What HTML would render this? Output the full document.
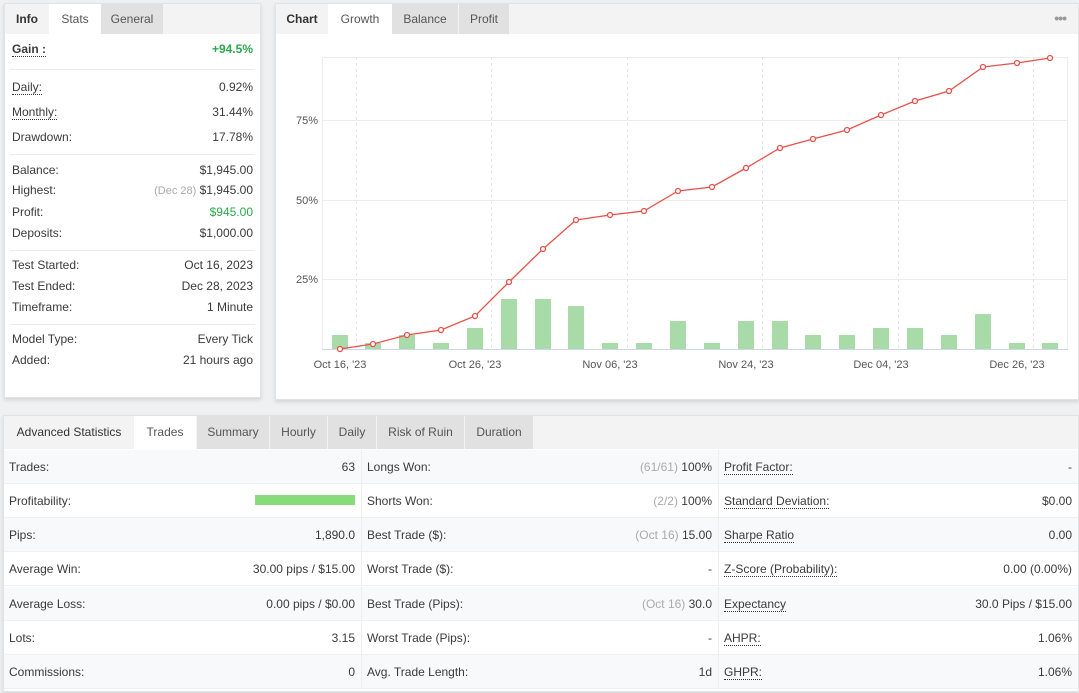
<!DOCTYPE html>
<html><head><meta charset="utf-8"><style>
*{box-sizing:border-box;margin:0;padding:0}
body{width:1079px;height:693px;background:#eef0f2;font-family:"Liberation Sans",sans-serif;font-size:12px;color:#3a3a3a;position:relative;overflow:hidden}
.panel{position:absolute;background:#fff;border:1px solid #e3e3e3;box-shadow:0 2px 4px rgba(0,0,0,.12)}
.tabs{position:absolute;left:0;top:0;right:0;height:30px;background:#f3f3f3}
.tab{position:absolute;top:0;height:30px;line-height:30px;text-align:center;color:#555}
.tab.g{background:#e1e1e1}
.tab.a{background:#fff}
.r{position:absolute;left:7px;right:7px;height:18px;line-height:18px}
.r .v{position:absolute;right:0;top:0}
.u{border-bottom:1px dotted #333}
.sep{position:absolute;left:5px;right:5px;height:1px;background:#eaeaea}
.grey{color:#aaa}
.green{color:#2aa84a}
.row{position:absolute;left:0;right:0;height:34px;line-height:34px;border-bottom:1px solid #eef0f2}
.row.o{background:#f7f9fb}
.c{position:absolute;top:0;height:33px}
.c .v{position:absolute;right:6px;top:0}
.c .l{position:absolute;left:5px;top:0}
</style></head><body>

<div class="panel" style="left:4px;top:3px;width:257px;height:395px">
 <div class="tabs" style="width:255px">
  <div class="tab" style="left:0;width:44px;font-weight:bold;color:#333">Info</div>
  <div class="tab a" style="left:44px;width:52px">Stats</div>
  <div class="tab g" style="left:96px;width:62px">General</div>
 </div>
 <div class="r" style="top:36px"><span class="u" style="font-weight:bold">Gain :</span><span class="v green" style="font-weight:bold">+94.5%</span></div>
 <div class="sep" style="top:65px"></div>
 <div class="r" style="top:74px"><span class="u">Daily:</span><span class="v">0.92%</span></div>
 <div class="r" style="top:99px"><span class="u">Monthly:</span><span class="v">31.44%</span></div>
 <div class="r" style="top:124px">Drawdown:<span class="v">17.78%</span></div>
 <div class="sep" style="top:150px"></div>
 <div class="r" style="top:157px">Balance:<span class="v">$1,945.00</span></div>
 <div class="r" style="top:177px">Highest:<span class="v"><span class="grey" style="font-size:11px">(Dec 28)</span> $1,945.00</span></div>
 <div class="r" style="top:199px">Profit:<span class="v green">$945.00</span></div>
 <div class="r" style="top:220px">Deposits:<span class="v">$1,000.00</span></div>
 <div class="sep" style="top:246px"></div>
 <div class="r" style="top:252px">Test Started:<span class="v">Oct 16, 2023</span></div>
 <div class="r" style="top:273px">Test Ended:<span class="v">Dec 28, 2023</span></div>
 <div class="r" style="top:294px">Timeframe:<span class="v">1 Minute</span></div>
 <div class="sep" style="top:320px"></div>
 <div class="r" style="top:326px">Model Type:<span class="v">Every Tick</span></div>
 <div class="r" style="top:347px">Added:<span class="v">21 hours ago</span></div>
</div>

<div class="panel" style="left:275px;top:3px;width:804px;height:397px">
 <div class="tabs">
  <div class="tab" style="left:0;width:52px;font-weight:bold;color:#333">Chart</div>
  <div class="tab a" style="left:52px;width:64px">Growth</div>
  <div class="tab g" style="left:116px;width:66px">Balance</div>
  <div class="tab g" style="left:183px;width:50px">Profit</div>
  <div style="position:absolute;right:12px;top:6px;color:#999;font-size:14px;letter-spacing:-1px;font-weight:bold">•••</div>
 </div>
</div>
<svg style="position:absolute;left:0;top:0" width="1079" height="400">
 <g stroke="#ececec" stroke-width="1">
  <line x1="322" y1="57.5" x2="1068" y2="57.5"/>
  <line x1="322" y1="120.5" x2="1068" y2="120.5"/>
  <line x1="322" y1="200.5" x2="1068" y2="200.5"/>
  <line x1="322" y1="279.5" x2="1068" y2="279.5"/>
  <line x1="322.5" y1="57" x2="322.5" y2="349"/>
  <line x1="1067.5" y1="57" x2="1067.5" y2="349"/>
 </g>
 <g stroke="#e6e6e6" stroke-dasharray="3,3">
  <line x1="356.5" y1="57" x2="356.5" y2="349"/><line x1="491.5" y1="57" x2="491.5" y2="349"/>
  <line x1="627.5" y1="57" x2="627.5" y2="349"/><line x1="762.5" y1="57" x2="762.5" y2="349"/>
  <line x1="898.5" y1="57" x2="898.5" y2="349"/><line x1="1033.5" y1="57" x2="1033.5" y2="349"/>
 </g>
 <g fill="#a9dba9">
  <rect x="332" y="335" width="16" height="14"/><rect x="365" y="343" width="16" height="6"/>
  <rect x="399" y="335" width="16" height="14"/><rect x="433" y="343" width="16" height="6"/>
  <rect x="467" y="328" width="16" height="21"/><rect x="501" y="299" width="16" height="50"/>
  <rect x="535" y="299" width="16" height="50"/><rect x="568" y="306" width="16" height="43"/>
  <rect x="602" y="343" width="16" height="6"/><rect x="636" y="343" width="16" height="6"/>
  <rect x="670" y="321" width="16" height="28"/><rect x="704" y="343" width="16" height="6"/>
  <rect x="738" y="321" width="16" height="28"/><rect x="772" y="321" width="16" height="28"/>
  <rect x="805" y="335" width="16" height="14"/><rect x="839" y="335" width="16" height="14"/>
  <rect x="873" y="328" width="16" height="21"/><rect x="907" y="328" width="16" height="21"/>
  <rect x="941" y="335" width="16" height="14"/><rect x="975" y="314" width="16" height="35"/>
  <rect x="1009" y="343" width="16" height="6"/><rect x="1042" y="343" width="16" height="6"/>
 </g>
 <line x1="322" y1="349.5" x2="1068" y2="349.5" stroke="#ccd6eb"/>
 <polyline fill="none" stroke="#e8514a" stroke-width="1.3" points="340,349 373,344 407,335 441,330 475,316 509,282 543,249 576,220 610,215 644,211 678,191 712,187 746,168 780,148 813,139 847,130 881,115 915,101 949,91 983,67 1017,63 1050,58"/>
 <g fill="#fff" stroke="#e8514a" stroke-width="1.3">
  <circle cx="340" cy="349" r="2.5"/><circle cx="373" cy="344" r="2.5"/><circle cx="407" cy="335" r="2.5"/><circle cx="441" cy="330" r="2.5"/><circle cx="475" cy="316" r="2.5"/><circle cx="509" cy="282" r="2.5"/><circle cx="543" cy="249" r="2.5"/><circle cx="576" cy="220" r="2.5"/><circle cx="610" cy="215" r="2.5"/><circle cx="644" cy="211" r="2.5"/><circle cx="678" cy="191" r="2.5"/><circle cx="712" cy="187" r="2.5"/><circle cx="746" cy="168" r="2.5"/><circle cx="780" cy="148" r="2.5"/><circle cx="813" cy="139" r="2.5"/><circle cx="847" cy="130" r="2.5"/><circle cx="881" cy="115" r="2.5"/><circle cx="915" cy="101" r="2.5"/><circle cx="949" cy="91" r="2.5"/><circle cx="983" cy="67" r="2.5"/><circle cx="1017" cy="63" r="2.5"/><circle cx="1050" cy="58" r="2.5"/>
 </g>
 <g font-family="Liberation Sans,sans-serif" font-size="11" fill="#555">
  <text x="318" y="124" text-anchor="end">75%</text><text x="318" y="204" text-anchor="end">50%</text><text x="318" y="283" text-anchor="end">25%</text>
  <text x="340" y="368" text-anchor="middle">Oct 16, '23</text><text x="475" y="368" text-anchor="middle">Oct 26, '23</text>
  <text x="610" y="368" text-anchor="middle">Nov 06, '23</text><text x="746" y="368" text-anchor="middle">Nov 24, '23</text>
  <text x="881" y="368" text-anchor="middle">Dec 04, '23</text><text x="1017" y="368" text-anchor="middle">Dec 26, '23</text>
 </g>
</svg>

<div class="panel" style="left:3px;top:415px;width:1076px;height:277px">
 <div class="tabs" style="height:33px">
  <div class="tab" style="left:0;width:130px;height:33px;line-height:33px;color:#333">Advanced Statistics</div>
  <div class="tab a" style="left:130px;width:62px;height:33px;line-height:33px">Trades</div>
  <div class="tab g" style="left:193px;width:72px;height:33px;line-height:33px">Summary</div>
  <div class="tab g" style="left:266px;width:57px;height:33px;line-height:33px">Hourly</div>
  <div class="tab g" style="left:324px;width:48px;height:33px;line-height:33px">Daily</div>
  <div class="tab g" style="left:373px;width:87px;height:33px;line-height:33px">Risk of Ruin</div>
  <div class="tab g" style="left:461px;width:68px;height:33px;line-height:33px">Duration</div>
 </div>
 <div style="position:absolute;left:0;top:34px;right:0">
  <div class="row o" style="top:0"><div class="c" style="left:0;width:357px"><span class="l">Trades:</span><span class="v">63</span></div><div class="c" style="left:357px;width:357px;border-left:1px solid #eee"><span class="l">Longs Won:</span><span class="v"><span class="grey">(61/61)</span> 100%</span></div><div class="c" style="left:714px;width:360px;border-left:1px solid #eee"><span class="l"><span class="u">Profit Factor:</span></span><span class="v">-</span></div></div>
  <div class="row" style="top:34px"><div class="c" style="left:0;width:357px"><span class="l">Profitability:</span><span style="position:absolute;right:6px;top:11px;width:100px;height:10px;background:#86dc7a"></span></div><div class="c" style="left:357px;width:357px;border-left:1px solid #eee"><span class="l">Shorts Won:</span><span class="v"><span class="grey">(2/2)</span> 100%</span></div><div class="c" style="left:714px;width:360px;border-left:1px solid #eee"><span class="l"><span class="u">Standard Deviation:</span></span><span class="v">$0.00</span></div></div>
  <div class="row o" style="top:68px"><div class="c" style="left:0;width:357px"><span class="l">Pips:</span><span class="v">1,890.0</span></div><div class="c" style="left:357px;width:357px;border-left:1px solid #eee"><span class="l">Best Trade ($):</span><span class="v"><span class="grey">(Oct 16)</span> 15.00</span></div><div class="c" style="left:714px;width:360px;border-left:1px solid #eee"><span class="l"><span class="u">Sharpe Ratio</span></span><span class="v">0.00</span></div></div>
  <div class="row" style="top:102px"><div class="c" style="left:0;width:357px"><span class="l">Average Win:</span><span class="v">30.00 pips / $15.00</span></div><div class="c" style="left:357px;width:357px;border-left:1px solid #eee"><span class="l">Worst Trade ($):</span><span class="v">-</span></div><div class="c" style="left:714px;width:360px;border-left:1px solid #eee"><span class="l"><span class="u">Z-Score (Probability):</span></span><span class="v">0.00 (0.00%)</span></div></div>
  <div class="row o" style="top:137px"><div class="c" style="left:0;width:357px"><span class="l">Average Loss:</span><span class="v">0.00 pips / $0.00</span></div><div class="c" style="left:357px;width:357px;border-left:1px solid #eee"><span class="l">Best Trade (Pips):</span><span class="v"><span class="grey">(Oct 16)</span> 30.0</span></div><div class="c" style="left:714px;width:360px;border-left:1px solid #eee"><span class="l"><span class="u">Expectancy</span></span><span class="v">30.0 Pips / $15.00</span></div></div>
  <div class="row" style="top:171px"><div class="c" style="left:0;width:357px"><span class="l">Lots:</span><span class="v">3.15</span></div><div class="c" style="left:357px;width:357px;border-left:1px solid #eee"><span class="l">Worst Trade (Pips):</span><span class="v">-</span></div><div class="c" style="left:714px;width:360px;border-left:1px solid #eee"><span class="l"><span class="u">AHPR:</span></span><span class="v">1.06%</span></div></div>
  <div class="row o" style="top:205px"><div class="c" style="left:0;width:357px"><span class="l">Commissions:</span><span class="v">0</span></div><div class="c" style="left:357px;width:357px;border-left:1px solid #eee"><span class="l">Avg. Trade Length:</span><span class="v">1d</span></div><div class="c" style="left:714px;width:360px;border-left:1px solid #eee"><span class="l"><span class="u">GHPR:</span></span><span class="v">1.06%</span></div></div>
 </div>
</div>
</body></html>
